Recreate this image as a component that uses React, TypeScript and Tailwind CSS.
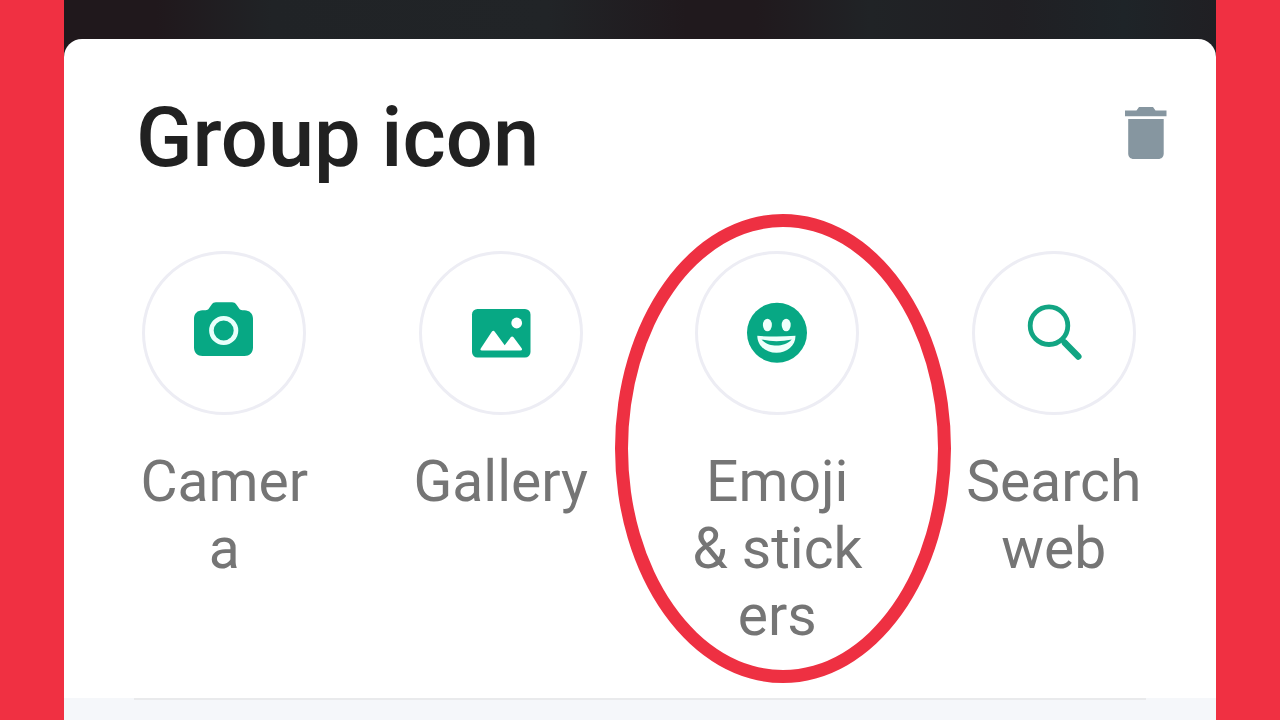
import type { ReactNode } from "react";

interface PickerOption {
  id: string;
  lines: string[];
  icon: ReactNode;
  highlighted?: boolean;
}

function CameraIcon() {
  return (
    <svg viewBox="0 0 72 72" className="size-[72px]" aria-hidden="true">
      <path
        d="M28 5.200h16c2 0 3.200.8 4.300 2.300l3 4.300c.8 1 1.700 1.400 3 1.400h2.200c5 0 8.500 3.500 8.500 8.500V50.500c0 5-3.500 8.500-8.500 8.500h-42C9.500 59 6 55.500 6 50.500V21.700c0-5 3.500-8.500 8.500-8.500h3.200c1.300 0 2.200-.4 3-1.400l3-4.300C24.800 6 26 5.200 28 5.200z"
        fill="#07a884"
      />
      <circle cx="35.700" cy="33.500" r="12.300" fill="none" stroke="#e8fffb" strokeWidth="4.600" />
    </svg>
  );
}

function GalleryIcon() {
  return (
    <svg viewBox="0 0 72 72" className="size-[72px]" aria-hidden="true">
      <rect x="7" y="12" width="58.500" height="48.500" rx="5.500" fill="#07a884" />
      <circle cx="51.700" cy="26" r="5.400" fill="#fff" />
      <path
        d="M15.900 51.300 26.800 34.800q1.500-2 3 0L39.700 48.300 45.700 40.300q1.400-1.700 2.800 0L56.500 51q1.500 2.600-1.200 2.600H17q-2.500-.1-1.100-2.300z"
        fill="#fff"
      />
    </svg>
  );
}

function EmojiIcon() {
  return (
    <svg viewBox="0 0 72 72" className="size-[72px]" aria-hidden="true">
      <circle cx="36" cy="35.700" r="30" fill="#07a884" />
      <ellipse cx="26.400" cy="28" rx="4.500" ry="6.300" fill="#effffb" />
      <ellipse cx="45.200" cy="28" rx="4.500" ry="6.300" fill="#effffb" />
      <path d="M16.300 38.800q19 1.600 38.200 0C54.500 49 46 55.800 35.500 55.800S16.300 49 16.300 38.800z" fill="#effffb" />
      <path d="M20.500 42.400q15 3.600 30.200 0C46 47.200 41 48.400 35.600 48.400S25 47.200 20.500 42.400z" fill="#07a884" />
    </svg>
  );
}

function SearchIcon() {
  return (
    <svg viewBox="0 0 72 72" className="size-[72px]" fill="none" stroke="#12a583" aria-hidden="true">
      <circle cx="31" cy="28.700" r="18.800" strokeWidth="4.800" />
      <path d="M44 42.500l4.500 4.500" strokeWidth="5" />
      <path d="M47 46l13.300 13.500" strokeWidth="6.500" strokeLinecap="round" />
    </svg>
  );
}

function TrashIcon() {
  return (
    <svg viewBox="0 0 42 54" className="h-[54px] w-[42px]" fill="#8696a0" aria-hidden="true">
      <path d="M0 4.500h11.500L14 1h14l2.500 3.500H41.500v5.700H0z" />
      <path d="M3.200 13h35.500v34.500c0 3.300-2.200 5.500-5.500 5.500H8.700c-3.300 0-5.500-2.200-5.500-5.500z" />
    </svg>
  );
}

const options: PickerOption[] = [
  { id: "camera", lines: ["Camer", "a"], icon: <CameraIcon /> },
  { id: "gallery", lines: ["Gallery"], icon: <GalleryIcon /> },
  { id: "emoji", lines: ["Emoji", "& stick", "ers"], icon: <EmojiIcon />, highlighted: true },
  { id: "search", lines: ["Search", "web"], icon: <SearchIcon /> },
];

function OptionButton({ option }: { option: PickerOption }) {
  return (
    <li className="relative flex justify-center">
      <button type="button" className="flex flex-col items-center">
        <span className="flex size-[164px] items-center justify-center rounded-full border-3 border-[#ededf4]">
          {option.icon}
        </span>
        <span className="mt-[33px] text-[57px] leading-[67px] text-[#757575]">
          {option.lines.map((line) => (
            <span key={line} className="block whitespace-nowrap">
              {line}
            </span>
          ))}
        </span>
      </button>
      {option.highlighted && (
        <span className="pointer-events-none absolute -top-[37px] -left-6 h-[469px] w-[336px] rounded-[50%] border-[13px] border-[#ee3042]" />
      )}
    </li>
  );
}

export default function App() {
  return (
    <div className="flex min-h-screen bg-[#f03042] px-[5%] font-['Roboto','Liberation_Sans',sans-serif]">
      <div className="flex flex-1 flex-col bg-[linear-gradient(to_right,#20181c_0%,#20181c_8%,#202326_18%,#212427_42%,#20191d_54%,#20191d_60%,#202326_70%,#201f23_82%,#1e2428_92%,#201f23_100%)] pt-[39px]">
        <main className="flex flex-1 flex-col overflow-hidden rounded-t-[18px] bg-white">
          <header className="flex items-start justify-between pt-[51px] pr-[49px] pl-[72px]">
            <h1 className="text-[83px] leading-[96px] font-medium text-[#212121]">Group icon</h1>
            <button type="button" aria-label="Remove icon" className="mt-4">
              <TrashIcon />
            </button>
          </header>
          <ul className="grid grid-cols-4 pt-[65px] pr-6 pb-[49px] pl-[22px]">
            {options.map((option) => (
              <OptionButton key={option.id} option={option} />
            ))}
          </ul>
          <div className="flex-1 bg-[#f5f7fa] px-[70px]">
            <hr className="border-t-2 border-[#e9eaec]" />
          </div>
        </main>
      </div>
    </div>
  );
}
